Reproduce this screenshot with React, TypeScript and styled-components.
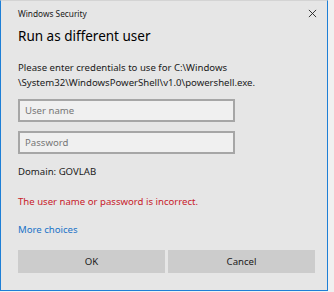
import React from "react";
import styled, { createGlobalStyle } from "styled-components";

const Global = createGlobalStyle`
  html, body { margin: 0; padding: 0; background: #f0f0f0; }
  body { width: 334px; height: 292px; overflow: hidden; font-family: "Noto Sans", sans-serif; }
  * { box-sizing: border-box; }
`;

const Window = styled.div`
  width: 328px;
  height: 291px;
  background: #e6e6e6;
  border: 1px solid #1e7fd6;
  border-top-color: #d4d4d4;
  display: flex;
  flex-direction: column;
  padding: 0 0 0 17px;
  color: #000;
`;

const TitleBar = styled.div`
  height: 25px;
  display: flex;
  align-items: center;
  justify-content: space-between;
  padding-right: 10px;
  font-size: 8.3px;
  color: #1a1a1a;
`;

const Close = styled.svg`
  width: 9px;
  height: 9px;
`;

const Heading = styled.h1`
  margin: 0;
  font-size: 13.5px;
  line-height: 20px;
  font-weight: 400;
  color: #000;
`;

const Text = styled.div<{ $top: number; $color?: string }>`
  margin-top: ${(p) => p.$top}px;
  font-size: 9.6px;
  line-height: 15px;
  color: ${(p) => p.$color || "#1a1a1a"};
`;

const Input = styled.div<{ $top: number }>`
  margin-top: ${(p) => p.$top}px;
  width: 217px;
  height: 23px;
  border: 2px solid #a6a6a6;
  background: #f0f0f0;
  display: flex;
  align-items: center;
  padding-left: 5px;
  font-size: 9.6px;
  color: #767676;
`;

const Buttons = styled.div`
  margin-top: 13px;
  display: flex;
  gap: 3px;
`;

const Button = styled.div`
  width: 147px;
  height: 23px;
  background: #cccccc;
  display: flex;
  align-items: center;
  justify-content: center;
  font-size: 9.6px;
  color: #1a1a1a;
`;

export default function App() {
  return (
    <>
      <Global />
      <Window>
        <TitleBar>
          <span>Windows Security</span>
          <Close viewBox="0 0 10 10">
            <path d="M1 1L9 9M9 1L1 9" stroke="#222" strokeWidth="1" fill="none" />
          </Close>
        </TitleBar>
        <Heading>Run as different user</Heading>
        <Text $top={14}>
          Please enter credentials to use for C:\Windows
          <br />
          \System32\WindowsPowerShell\v1.0\powershell.exe.
        </Text>
        <Input $top={9}>User name</Input>
        <Input $top={9}>Password</Input>
        <Text $top={10}>Domain: GOVLAB</Text>
        <Text $top={15} $color="#c8202a">The user name or password is incorrect.</Text>
        <Text $top={13} $color="#1a73c8">More choices</Text>
        <Buttons>
          <Button>OK</Button>
          <Button>Cancel</Button>
        </Buttons>
      </Window>
    </>
  );
}
